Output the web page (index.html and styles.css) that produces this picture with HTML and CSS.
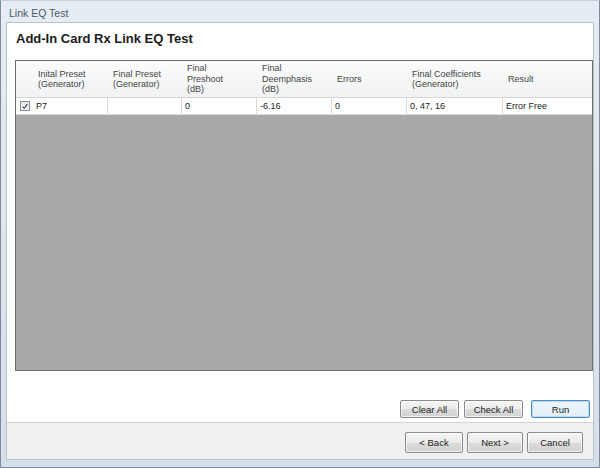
FILE: index.html
```html
<!DOCTYPE html>
<html>
<head>
<meta charset="utf-8">
<link rel="stylesheet" href="styles.css">
</head>
<body>
<div class="window">
  <div class="titlebar">Link EQ Test</div>
  <div class="client">
    <div class="content">
      <h1 class="heading">Add-In Card Rx Link EQ Test</h1>
      <div class="table">
        <div class="row head">
          <div class="cell"></div>
          <div class="cell">Inital Preset<br>(Generator)</div>
          <div class="cell">Final Preset<br>(Generator)</div>
          <div class="cell">Final<br>Preshoot<br>(dB)</div>
          <div class="cell">Final<br>Deemphasis<br>(dB)</div>
          <div class="cell">Errors</div>
          <div class="cell">Final Coefficients<br>(Generator)</div>
          <div class="cell">Result</div>
        </div>
        <div class="row data">
          <div class="cell chk"><span class="checkbox"><svg viewBox="0 0 9 9" width="9" height="9"><path d="M1.8 4.6 L3.6 6.6 L7.2 1.8" fill="none" stroke="#3a4f8a" stroke-width="1.4"/></svg></span></div>
          <div class="cell">P7</div>
          <div class="cell"></div>
          <div class="cell">0</div>
          <div class="cell">-6.16</div>
          <div class="cell">0</div>
          <div class="cell">0, 47, 16</div>
          <div class="cell">Error Free</div>
        </div>
        <div class="empty"></div>
      </div>
      <div class="actions">
        <button class="btn">Clear All</button>
        <button class="btn">Check All</button>
        <button class="btn focus">Run</button>
      </div>
    </div>
    <div class="footer">
      <button class="btn nav">&lt; Back</button>
      <button class="btn nav">Next &gt;</button>
      <button class="btn nav">Cancel</button>
    </div>
  </div>
</div>
</body>
</html>
```

FILE: styles.css
```css
* { box-sizing: border-box; }
html, body { margin: 0; padding: 0; }
body {
  width: 600px;
  height: 468px;
  overflow: hidden;
  font-family: "Liberation Sans", Arial, sans-serif;
  background: #fff;
}
.window {
  width: 600px;
  height: 468px;
  background: linear-gradient(#e6ecf3, #d5dfea);
  border: 1px solid #7f8b98;
  border-top-color: #c7d0da;
  display: flex;
  flex-direction: column;
  padding: 0 5px 7px 5px;
}
.titlebar {
  height: 21px;
  font-size: 10.5px;
  color: #4b5a6a;
  padding: 6px 0 0 3px;
  flex: none;
}
.client {
  flex: 1;
  display: flex;
  flex-direction: column;
  background: #fff;
  border: 1px solid #b9c3cd;
}
.content {
  flex: 1;
  display: flex;
  flex-direction: column;
  padding: 0 0 0 8px;
}
.heading {
  margin: 8px 0 0 1px;
  font-size: 13px;
  font-weight: bold;
  color: #1b1b1b;
  height: 29px;
  line-height: 16px;
}
.table {
  width: 578px;
  height: 311px;
  border: 1px solid #6f6f6f;
  display: flex;
  flex-direction: column;
  background: #a9a9a9;
}
.row {
  display: grid;
  grid-template-columns: 17px 75px 74px 75px 75px 75px 96px 1fr;
  font-size: 9px;
  color: #333;
}
.head {
  height: 37px;
  background: linear-gradient(#fbfbfb, #f1f2f3);
  border-bottom: 1px solid #d5d5d5;
}
.head .cell {
  display: flex;
  align-items: center;
  padding-left: 5px;
  line-height: 10.5px;
  color: #444;
}
.data {
  height: 17px;
  background: #fff;
  border-bottom: 1px solid #d8d8d8;
}
.data .cell {
  border-right: 1px solid #d8d8d8;
  padding-left: 3px;
  line-height: 16px;
  color: #222;
}
.data .cell:last-child { border-right: none; }
.data .chk {
  display: flex;
  align-items: center;
  justify-content: center;
  padding-left: 0;
  border-right: none;
}
.checkbox {
  width: 10px;
  height: 10px;
  border: 1px solid #8e8f8f;
  background: linear-gradient(#e6e7ea, #f6f6f6);
  display: flex;
  align-items: center;
  justify-content: center;
}
.checkbox svg { display: block; }
.empty { flex: 1; }
.actions {
  display: flex;
  justify-content: flex-end;
  gap: 5px;
  margin-top: 29px;
  padding-right: 3px;
}
.btn {
  font-family: "Liberation Sans", Arial, sans-serif;
  font-size: 9.5px;
  color: #222;
  height: 18px;
  width: 59px;
  border: 1px solid #8a8a8a;
  border-radius: 2px;
  background: linear-gradient(#f5f5f5 0%, #ebebeb 50%, #dcdcdc 51%, #d2d2d2 100%);
  padding: 0;
  box-shadow: inset 0 0 0 1px rgba(255,255,255,0.7);
}
.actions .btn.focus {
  margin-left: 3px;
  border-color: #4c8ec2;
  background: linear-gradient(#eef6fc, #e2eef8);
  box-shadow: inset 0 0 0 1px #b9dbf4;
}
.footer {
  height: 37px;
  flex: none;
  background: #f0f0f0;
  border-top: 1px solid #d3d3d3;
  display: flex;
  justify-content: flex-end;
  align-items: flex-start;
  gap: 4px;
  padding: 9px 10px 0 0;
}
.btn.nav {
  width: 56px;
  height: 21px;
}
.btn.nav:first-child { width: 58px; }
```
